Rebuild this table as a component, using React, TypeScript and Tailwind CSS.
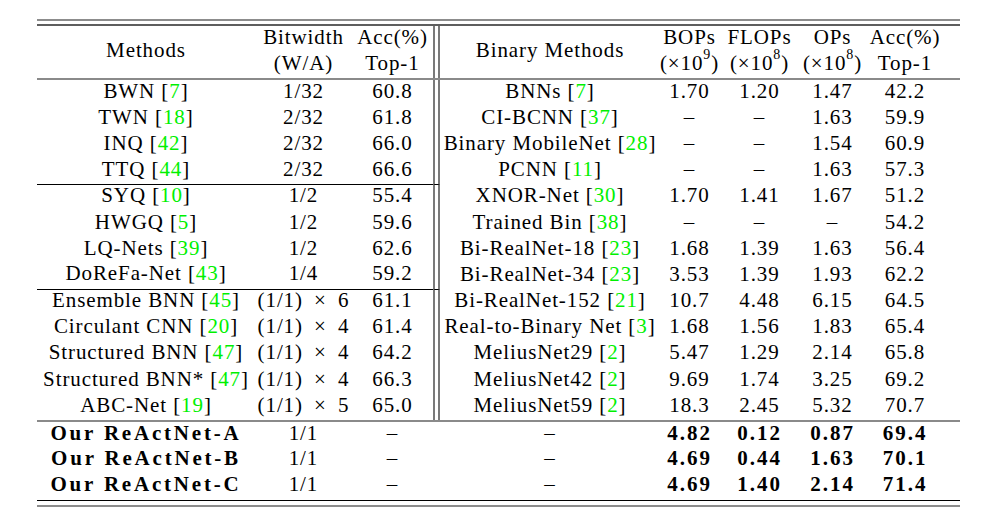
import React from "react";

type Cite = { name: string; ref?: string };

type Row = {
  m: Cite;
  bw: string;
  acc: string;
  bm: Cite;
  bops: string;
  flops: string;
  ops: string;
  acc2: string;
  cl?: boolean;
};

const rows: Row[] = [
  { m: { name: "BWN", ref: "7" }, bw: "1/32", acc: "60.8", bm: { name: "BNNs", ref: "7" }, bops: "1.70", flops: "1.20", ops: "1.47", acc2: "42.2" },
  { m: { name: "TWN", ref: "18" }, bw: "2/32", acc: "61.8", bm: { name: "CI-BCNN", ref: "37" }, bops: "–", flops: "–", ops: "1.63", acc2: "59.9" },
  { m: { name: "INQ", ref: "42" }, bw: "2/32", acc: "66.0", bm: { name: "Binary MobileNet", ref: "28" }, bops: "–", flops: "–", ops: "1.54", acc2: "60.9" },
  { m: { name: "TTQ", ref: "44" }, bw: "2/32", acc: "66.6", bm: { name: "PCNN", ref: "11" }, bops: "–", flops: "–", ops: "1.63", acc2: "57.3", cl: true },
  { m: { name: "SYQ", ref: "10" }, bw: "1/2", acc: "55.4", bm: { name: "XNOR-Net", ref: "30" }, bops: "1.70", flops: "1.41", ops: "1.67", acc2: "51.2" },
  { m: { name: "HWGQ", ref: "5" }, bw: "1/2", acc: "59.6", bm: { name: "Trained Bin", ref: "38" }, bops: "–", flops: "–", ops: "–", acc2: "54.2" },
  { m: { name: "LQ-Nets", ref: "39" }, bw: "1/2", acc: "62.6", bm: { name: "Bi-RealNet-18", ref: "23" }, bops: "1.68", flops: "1.39", ops: "1.63", acc2: "56.4" },
  { m: { name: "DoReFa-Net", ref: "43" }, bw: "1/4", acc: "59.2", bm: { name: "Bi-RealNet-34", ref: "23" }, bops: "3.53", flops: "1.39", ops: "1.93", acc2: "62.2", cl: true },
  { m: { name: "Ensemble BNN", ref: "45" }, bw: "(1/1)|6", acc: "61.1", bm: { name: "Bi-RealNet-152", ref: "21" }, bops: "10.7", flops: "4.48", ops: "6.15", acc2: "64.5" },
  { m: { name: "Circulant CNN", ref: "20" }, bw: "(1/1)|4", acc: "61.4", bm: { name: "Real-to-Binary Net", ref: "3" }, bops: "1.68", flops: "1.56", ops: "1.83", acc2: "65.4" },
  { m: { name: "Structured BNN", ref: "47" }, bw: "(1/1)|4", acc: "64.2", bm: { name: "MeliusNet29", ref: "2" }, bops: "5.47", flops: "1.29", ops: "2.14", acc2: "65.8" },
  { m: { name: "Structured BNN*", ref: "47" }, bw: "(1/1)|4", acc: "66.3", bm: { name: "MeliusNet42", ref: "2" }, bops: "9.69", flops: "1.74", ops: "3.25", acc2: "69.2" },
  { m: { name: "ABC-Net", ref: "19" }, bw: "(1/1)|5", acc: "65.0", bm: { name: "MeliusNet59", ref: "2" }, bops: "18.3", flops: "2.45", ops: "5.32", acc2: "70.7" },
];

const ours = [
  { name: "Our ReActNet-A", bops: "4.82", flops: "0.12", ops: "0.87", acc: "69.4" },
  { name: "Our ReActNet-B", bops: "4.69", flops: "0.44", ops: "1.63", acc: "70.1" },
  { name: "Our ReActNet-C", bops: "4.69", flops: "1.40", ops: "2.14", acc: "71.4" },
];

function Name({ c }: { c: Cite }) {
  return (
    <span className="whitespace-pre">
      {c.name}
      {c.ref ? (
        <>
          {" "}
          [<span className="text-[#00f000]">{c.ref}</span>]
        </>
      ) : null}
    </span>
  );
}

function Bw({ v }: { v: string }) {
  if (v.includes("|")) {
    const [a, b] = v.split("|");
    return (
      <span className="whitespace-pre">
        {a} <span className="px-[5px]">×</span> {b}
      </span>
    );
  }
  return <span>{v}</span>;
}

const cell = "flex h-full items-center justify-center pb-[4px]";

export default function App() {
  return (
    <div className="h-[512px] w-[992px] bg-white text-black [font-family:Liberation_Serif,serif] text-[21px] tracking-[0.9px] leading-none">
      <div className="ml-[37px] w-[923px] pt-[19px]">
        <div className="h-[2px] bg-[#8c8c8c]" />
        <div className="h-[3px]" />
        <div className="h-[2px] bg-[#5e5e5e]" />
        {/* header */}
        <div className="flex h-[52px]">
          <div className={`w-[218px] ${cell}`}>Methods</div>
          <div className="flex w-[97px] flex-col">
            <div className={`h-[26px] ${cell}`}>Bitwidth</div>
            <div className={`h-[26px] ${cell}`}>(W/A)</div>
          </div>
          <div className="flex w-[81px] flex-col">
            <div className={`h-[26px] ${cell}`}>Acc(%)</div>
            <div className={`h-[26px] ${cell}`}>Top-1</div>
          </div>
          <div className="h-full w-[7px] border-x-2 border-[#7a7a7a]" />
          <div className={`w-[220px] ${cell}`}>Binary Methods</div>
          <div className="flex w-[59px] flex-col">
            <div className={`h-[26px] ${cell}`}>BOPs</div>
            <div className={`h-[26px] ${cell} whitespace-pre`}>
              (×10<sup className="text-[14px] -top-[0.6em]">9</sup>)
            </div>
          </div>
          <div className="flex w-[81px] flex-col">
            <div className={`h-[26px] ${cell}`}>FLOPs</div>
            <div className={`h-[26px] ${cell} whitespace-pre`}>
              (×10<sup className="text-[14px] -top-[0.6em]">8</sup>)
            </div>
          </div>
          <div className="flex w-[65px] flex-col">
            <div className={`h-[26px] ${cell}`}>OPs</div>
            <div className={`h-[26px] ${cell} whitespace-pre`}>
              (×10<sup className="text-[14px] -top-[0.6em]">8</sup>)
            </div>
          </div>
          <div className="flex w-[95px] flex-col pr-[15px]">
            <div className={`h-[26px] ${cell}`}>Acc(%)</div>
            <div className={`h-[26px] ${cell}`}>Top-1</div>
          </div>
        </div>
        <div className="h-[2px] bg-[#8a8a8a]" />
        {rows.map((r, i) => (
          <div key={i} className="flex h-[26.2px]">
            <div className={`w-[218px] ${cell} ${r.cl ? "border-b border-black" : ""}`}>
              <Name c={r.m} />
            </div>
            <div className={`w-[97px] ${cell} ${r.cl ? "border-b border-black" : ""}`}>
              <Bw v={r.bw} />
            </div>
            <div className={`w-[81px] ${cell} ${r.cl ? "border-b border-black" : ""}`}>{r.acc}</div>
            <div className={`h-full w-[7px] border-x-2 border-[#7a7a7a] ${r.cl ? "border-b border-b-black" : ""}`} />
            <div className={`w-[220px] ${cell}`}>
              <Name c={r.bm} />
            </div>
            <div className={`w-[59px] ${cell}`}>{r.bops}</div>
            <div className={`w-[81px] ${cell}`}>{r.flops}</div>
            <div className={`w-[65px] ${cell}`}>{r.ops}</div>
            <div className={`w-[95px] ${cell} pr-[15px]`}>{r.acc2}</div>
          </div>
        ))}
        <div className="h-[2px] bg-[#8a8a8a]" />
        {ours.map((o, i) => (
          <div key={i} className="flex h-[25.7px]">
            <div className={`w-[218px] ${cell} font-bold tracking-[2.8px]`}>{o.name}</div>
            <div className={`w-[97px] ${cell}`}>1/1</div>
            <div className={`w-[81px] ${cell}`}>–</div>
            <div className="w-[7px]" />
            <div className={`w-[220px] ${cell}`}>–</div>
            <div className={`w-[59px] ${cell} font-bold tracking-[2px]`}>{o.bops}</div>
            <div className={`w-[81px] ${cell} font-bold tracking-[2px]`}>{o.flops}</div>
            <div className={`w-[65px] ${cell} font-bold tracking-[2px]`}>{o.ops}</div>
            <div className={`w-[95px] ${cell} pr-[15px] font-bold tracking-[2px]`}>{o.acc}</div>
          </div>
        ))}
        <div className="h-[1.5px] bg-black" />
        <div className="h-[3.5px]" />
        <div className="h-[2px] bg-[#8c8c8c]" />
      </div>
    </div>
  );
}
